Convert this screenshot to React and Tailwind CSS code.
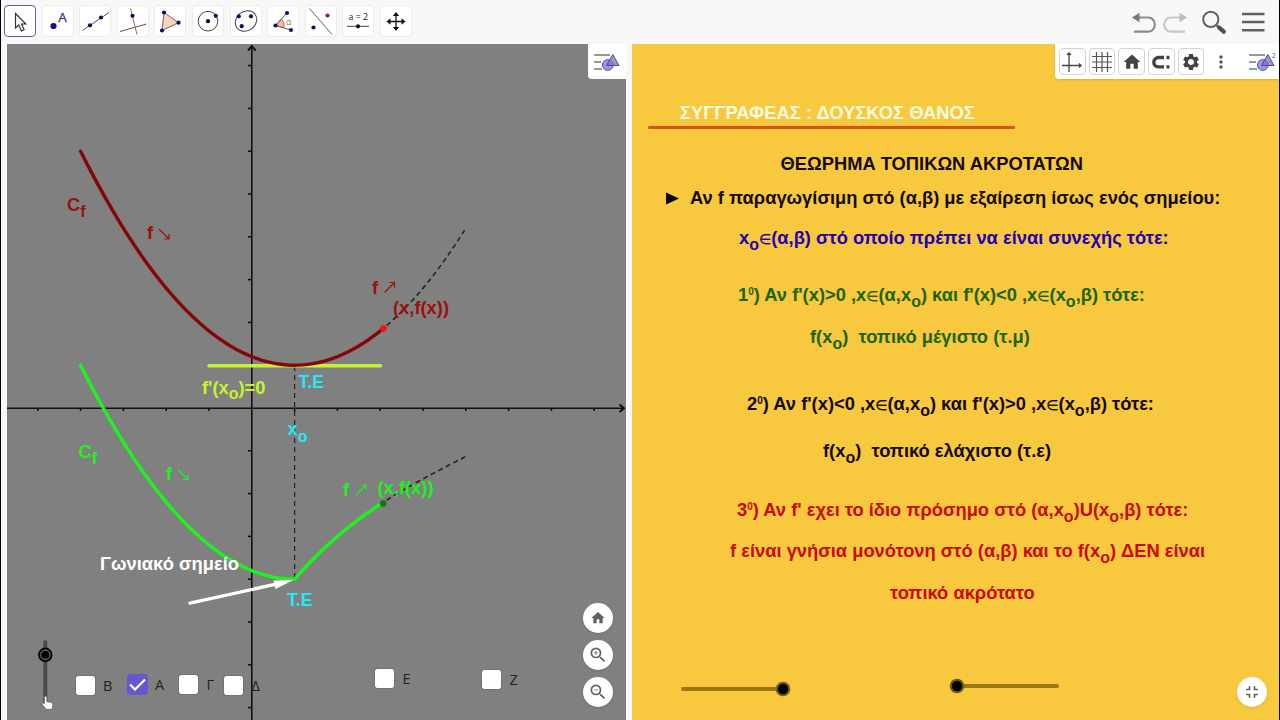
import { MdFullscreenExit, MdHome, MdMoreVert, MdSettings, MdZoomIn, MdZoomOut } from 'react-icons/md';
import clsx from 'clsx';

const NAVY = '#10106b';

// Origin and scale of the graphics view, in pixels
const ORIGIN = { x: 251.8, y: 408 };
const UNIT = 42.8;

const px = (x) => ORIGIN.x + x * UNIT;
const py = (y) => ORIGIN.y - y * UNIT;

function plot(fn, from, to) {
    const points = [];
    for (let i = 0; i <= 60; i++) {
        const x = from + ((to - from) * i) / 60;
        points.push(`${px(x).toFixed(2)},${py(fn(x)).toFixed(2)}`);
    }
    return points.join(' ');
}

const smooth = (x) => (x - 1) ** 2 / 5 + 1;
const cornerLeft = (x) => (x - 1) ** 2 / 5 - 4;
const cornerRight = (x) => {
    const t = x - 1;
    return -4 + 1.15 * t - 0.167 * t ** 2 + 0.0147 * t ** 3;
};

const Dot = ({ x, y, fill = NAVY, r = 2.1 }) => <circle cx={x} cy={y} r={r} fill={fill} />;

const tools = [
    {
        id: 'move',
        icon: <path d="M11.5 8.5V23l3.3-3 2.6 6 2.7-1.2-2.6-5.8h4.3z" fill="#fff" stroke="#333" strokeWidth="1.2" />,
    },
    {
        id: 'point',
        icon: (
            <>
                <Dot x={11.5} y={21} r={3.1} fill="#10108a" />
                <text x="16.3" y="16.7" fontSize="13.5" fill="#34348c" stroke="#34348c" strokeWidth=".3">A</text>
            </>
        ),
    },
    {
        id: 'line',
        icon: (
            <>
                <path d="M3.5 25.5 30 7.5" stroke="#555" />
                <Dot x={11} y={20.3} />
                <Dot x={22} y={12.5} />
            </>
        ),
    },
    {
        id: 'perpendicular',
        icon: (
            <>
                <path d="M3 26.5 29.5 19" stroke="#555" />
                <path d="M13.5 3.5 20 29.5" stroke="#a0695c" />
                <Dot x={15.5} y={10.8} />
            </>
        ),
    },
    {
        id: 'polygon',
        icon: (
            <>
                <path d="M10 7.5 24.5 17.7 8 25.5z" fill="#f5d3bd" stroke="#7a6560" />
                <Dot x={10} y={7.5} />
                <Dot x={24.5} y={17.7} />
                <Dot x={8} y={25.5} />
            </>
        ),
    },
    {
        id: 'circle',
        icon: (
            <>
                <circle cx="16" cy="16.2" r="9.8" fill="none" stroke="#444" />
                <Dot x={16} y={16.2} fill="#111" />
                <Dot x={23.8} y={10.8} />
            </>
        ),
    },
    {
        id: 'conic',
        icon: (
            <>
                <ellipse cx="16" cy="16" rx="11.3" ry="9.6" transform="rotate(-38 16 16)" fill="none" stroke="#444" />
                <Dot x={8.8} y={11.3} />
                <Dot x={21} y={11.3} />
                <Dot x={11.7} y={21.2} />
            </>
        ),
    },
    {
        id: 'angle',
        icon: (
            <>
                <path d="M8.5 20.5 14.5 14q3.5 3.5 2.5 8.5z" fill="#f5b9b0" stroke="#b34a4a" strokeWidth=".8" />
                <path d="M20 8 8.5 20.5 24 25" fill="none" stroke="#664" />
                <text x="19" y="19.5" fontSize="8.5" fill="#b06a4a">α</text>
                <Dot x={20} y={8} />
                <Dot x={8.5} y={20.5} />
                <Dot x={24} y={25} />
            </>
        ),
    },
    {
        id: 'reflect',
        icon: (
            <>
                <path d="M4.5 3.5 27 29.5" stroke="#666" />
                <Dot x={22.5} y={10.5} fill="#8b2a22" />
                <Dot x={8.5} y={22.5} />
            </>
        ),
    },
    {
        id: 'slider',
        icon: (
            <>
                <text x="6.5" y="15" fontSize="9.6" fill="#222" textLength="19.5" lengthAdjust="spacingAndGlyphs">a = 2</text>
                <path d="M5 21.3h22" stroke="#444" />
                <Dot x={16} y={21.3} fill="#111" />
            </>
        ),
    },
    {
        id: 'pan',
        icon: (
            <>
                <path d="M9 16.5h14M16 9.5v14" stroke="#111" strokeWidth="1.3" />
                <path d="m16 7 3.2 4h-6.4zm0 19 3.2-4h-6.4zM6.5 16.5l4-3.2v6.4zm19 0-4-3.2v6.4z" fill="#111" />
            </>
        ),
    },
];

function ToolButton({ active, children }) {
    return (
        <button
            className={clsx(
                'h-8 w-8 rounded border bg-white',
                active ? 'border-[#6a5f94]' : 'border-[#ececec]'
            )}
        >
            <svg viewBox="1 1 30 30" className="h-full w-full font-['Open_Sans',sans-serif]">{children}</svg>
        </button>
    );
}

function TopBar() {
    return (
        <header className="flex h-11 shrink-0 items-start justify-between bg-[#f8f8f8] pt-[5px] pr-[11.5px] pl-[3px]">
            <div className="flex gap-[5.6px]">
                {tools.map((tool, i) => (
                    <ToolButton key={tool.id} active={i === 0}>{tool.icon}</ToolButton>
                ))}
            </div>
            <svg width="148" height="36" viewBox="1120 5 148 36" fill="none">
                <path d="M1138 17.5h10.5a6 6.8 0 0 1 0 14.2H1134" stroke="#8b8b8b" strokeWidth="2.2" />
                <path d="m1132 17.5 7.5-4.8v9.6z" fill="#777" />
                <path d="M1181 17.5h-10.5a6 6.8 0 0 0 0 14.2h14.5" stroke="#c8c8c8" strokeWidth="2.2" />
                <path d="m1187 17.5-7.5-4.8v9.6z" fill="#bbb" />
                <circle cx="1210.8" cy="19.3" r="7.6" stroke="#606060" strokeWidth="2" />
                <path d="m1216.3 25 2.7 2.7" stroke="#606060" strokeWidth="2" />
                <path d="m1219 27.5 4.8 4.2" stroke="#505050" strokeWidth="4.2" strokeLinecap="round" />
                <path d="M1242 14h22.5M1242 22h22.5M1242 30.2h22.5" stroke="#606060" strokeWidth="2.4" />
            </svg>
        </header>
    );
}

function StyleBarIcon() {
    return (
        <svg width="28" height="22" viewBox="0 0 28 22">
            <path d="M1 4h16M1 11h7M1 18h8" stroke="#777" strokeWidth="1.7" />
            <circle cx="14.8" cy="14" r="5.4" fill="#9797e6" stroke="#5656a6" />
            <path d="M19.8 3.5 26 14.5H13.5z" fill="#7777bf" fillOpacity=".75" stroke="#4b4b91" />
        </svg>
    );
}

const bold = "font-['Liberation_Sans',Arial,sans-serif] font-bold";

function Label({ x, y, color, children, width }) {
    return (
        <text x={x} y={y} fill={color} textLength={width} lengthAdjust="spacingAndGlyphs">{children}</text>
    );
}

function Trend({ x, y, up, color }) {
    return up ? (
        <path d={`M${x} ${y}l10-10m-5 0h5v5`} fill="none" stroke={color} strokeWidth="1.2" />
    ) : (
        <path d={`M${x} ${y - 10}l10 10m-5 0h5v-5`} fill="none" stroke={color} strokeWidth="1.2" />
    );
}

function Graph() {
    const xTicks = [-5, -4, -3, -2, -1, 1, 2, 3, 4, 5, 6, 7, 8];
    const yTicks = [-7, -6, -5, -4, -3, -2, -1, 1, 2, 3, 4, 5, 6, 7, 8];
    return (
        <svg width="619" height="676" viewBox="7 44 619 676" className={clsx('block text-[18.3px]', bold)}>
            <g stroke="#111" strokeWidth="1.6" fill="none">
                <path d="M7 408.3H624M251.8 720V47" />
                <path d="m619.5 404.5 4.5 3.8-4.5 3.8M248 50.5l3.8-4.5 3.8 4.5" strokeWidth="2" />
                {xTicks.map((n) => <path key={n} d={`M${px(n)} 408v3`} />)}
                {yTicks.map((n) => <path key={n} d={`M251 ${py(n)}h-3`} />)}
            </g>

            <path d="M294.6 366V579" stroke="#222" strokeWidth="1.2" strokeDasharray="5 4" />
            <path d="M209 365.8H380.5" stroke="#c3f52c" strokeWidth="3.4" strokeLinecap="round" />

            <g fill="none" stroke="#222" strokeWidth="1.6" strokeDasharray="5 3.5">
                <polyline points={plot(smooth, 3.15, 4.97)} />
                <polyline points={plot(cornerRight, 3.15, 5)} />
            </g>
            <g fill="none" strokeWidth="3.4" strokeLinecap="round">
                <polyline points={plot(smooth, -4, 3.07)} stroke="#850606" />
                <polyline points={plot(cornerLeft, -4, 1)} stroke="#1bf51b" />
                <polyline points={plot(cornerRight, 1, 3.07)} stroke="#1bf51b" />
            </g>
            <circle cx="383.4" cy="328.6" r="3.3" fill="#fb1010" />
            <circle cx="383.2" cy="503.5" r="3.3" fill="#137a13" />

            <Label x="67" y="211" color="#9b0f0f">C<tspan dy="6" fontSize="16">f</tspan></Label>
            <Label x="147" y="239" color="#9b0f0f">f</Label>
            <Trend x={159} y={239} color="#9b0f0f" />
            <Label x="372" y="293.5" color="#9b0f0f">f</Label>
            <Trend x={384.5} y={292.5} up color="#9b0f0f" />
            <Label x="393" y="313.5" width="56" color="#9b0f0f">(x,f(x))</Label>
            <Label x="202" y="393.5" color="#c3f52c">f'(x<tspan dy="5" fontSize="16">o</tspan><tspan dy="-5">)=0</tspan></Label>
            <Label x="298.5" y="387.5" width="25.5" color="#20eaf5">T.E</Label>
            <Label x="287.5" y="435" color="#20eaf5">x<tspan dy="6.5" fontSize="16">o</tspan></Label>
            <Label x="78.5" y="458" color="#1bf51b">C<tspan dy="6" fontSize="16">f</tspan></Label>
            <Label x="166" y="480" color="#1bf51b">f</Label>
            <Trend x={178} y={479.5} color="#1bf51b" />
            <Label x="343" y="496" color="#1bf51b">f</Label>
            <Trend x={356} y={495} up color="#1bf51b" />
            <Label x="377.5" y="494" width="56" color="#1bf51b">(x,f(x))</Label>
            <Label x="287" y="606" width="25.5" color="#20eaf5">T.E</Label>
            <Label x="100" y="570" width="139" color="#fff">Γωνιακό σημείο</Label>

            <path d="M190 603.2 276 584.2" stroke="#fff" strokeWidth="3.4" strokeLinecap="round" />
            <path d="m293 580.3-19.5.1 2 8.5z" fill="#fff" />

            <path d="M45.3 642V704" stroke="#4b4b4b" strokeWidth="4" strokeLinecap="round" />
            <circle cx="45.3" cy="654.8" r="6.5" fill="#222" stroke="#000" strokeWidth="1.4" />
            <circle cx="45.3" cy="654.8" r="4.6" fill="#000" stroke="#777" strokeWidth="1" />
            <path
                d="M44.3 697.5c0-1.8 2.6-1.8 2.6 0v4l4 .8c1.6.4 2.2 1.2 2 2.8l-.8 4.3h-6l-4-5c-.6-1.4.8-2 2.2-.8z"
                fill="#fff"
                stroke="#555"
                strokeWidth=".8"
            />
        </svg>
    );
}

const checkboxes = [
    { label: 'B', place: 'left-[68.5px] top-[632px]' },
    { label: 'A', place: 'left-[120.5px] top-[631px]', checked: true },
    { label: 'Γ', place: 'left-[172px] top-[631px]' },
    { label: 'Δ', place: 'left-[217px] top-[632px]' },
    { label: 'E', place: 'left-[368px] top-[624.5px]' },
    { label: 'Z', place: 'left-[475px] top-[626px]' },
];

function Checkbox({ label, place, checked }) {
    return (
        <div className={clsx("absolute flex items-center gap-[8.5px] font-['Open_Sans',sans-serif] text-[14.5px] leading-[19px] text-[#222]", place)}>
            <span
                className={clsx(
                    'flex size-[19px] items-center justify-center rounded-[2px] outline',
                    checked ? 'bg-[#6557d2] outline-[#6557d2]' : 'bg-white outline-[#737373]'
                )}
            >
                {checked && (
                    <svg viewBox="0 0 19 19" className="size-[19px]">
                        <path d="m2 9.5 5 5L17 4.5" fill="none" stroke="#fff" strokeWidth="2.2" />
                    </svg>
                )}
            </span>
            {label}
        </div>
    );
}

function RoundButton({ children }) {
    return (
        <button className="flex size-[30px] items-center justify-center rounded-full bg-white text-[20px] text-[#616161] shadow">
            {children}
        </button>
    );
}

function GraphicsView() {
    return (
        <section className="relative w-[619px] shrink-0 overflow-hidden bg-[#808080]">
            <Graph />
            {checkboxes.map((box) => <Checkbox key={box.label} {...box} />)}
            <div className="absolute top-0 right-0 flex h-[35px] w-[38px] items-center justify-center rounded-bl bg-white">
                <StyleBarIcon />
            </div>
            <div className="absolute top-[559px] right-[13.5px] flex flex-col gap-[7px]">
                <RoundButton><MdHome className="size-4" /></RoundButton>
                <RoundButton><MdZoomIn /></RoundButton>
                <RoundButton><MdZoomOut /></RoundButton>
            </div>
        </section>
    );
}

const Xo = () => <>x<sub className="bottom-auto top-[6px] text-[16px]">o</sub></>;
const In = () => <span className="font-['DejaVu_Sans',sans-serif] text-[14px] font-normal [-webkit-text-stroke:0.3px]">∈</span>;
const Nth = ({ n }) => <>{n}<sup className="top-[-6px] text-[10px]">0</sup>)</>;

function Line({ className, children }) {
    return <p className={clsx('h-6 whitespace-pre', className)}>{children}</p>;
}

function Theorem() {
    return (
        <div className={clsx('flex flex-col pt-[57px] text-[18.34px] leading-6 text-[#140a00]', bold)}>
            <Line className="pl-12 tracking-[0.04px] text-[#fffbe0]">ΣΥΓΓΡΑΦΕΑΣ : ΔΟΥΣΚΟΣ ΘΑΝΟΣ</Line>
            <hr className="mt-[1px] ml-4 h-[2.5px] w-[367px] rounded border-0 bg-[#dd5019]" />
            <Line className="mt-[23.5px] pl-[148.5px]">ΘΕΩΡΗΜΑ ΤΟΠΙΚΩΝ ΑΚΡΟΤΑΤΩΝ</Line>
            <div className="mt-[10px] flex items-center pl-[34px]">
                <svg width="13" height="13" viewBox="0 0 13 13"><path d="M0 .5 13 6.5 0 12.5z" /></svg>
                <Line className="pl-[11px]">Αν f παραγωγίσιμη στό (α,β) με εξαίρεση ίσως ενός σημείου:</Line>
            </div>
            <Line className="mt-[16px] pl-[107px] text-[#2200b4]"><Xo /><In />(α,β) στό οποίο πρέπει να είναι συνεχής τότε:</Line>
            <div className="mt-[33px] text-[#1c6400]">
                <Line className="pl-[106px]"><Nth n="1" /> Αν f'(x)&gt;0 ,x<In />(α,<Xo />) και f'(x)&lt;0 ,x<In />(<Xo />,β) τότε:</Line>
                <Line className="mt-[18px] pl-[178px]">f(<Xo />)  τοπικό μέγιστο (τ.μ)</Line>
            </div>
            <Line className="mt-[43px] pl-[115px]"><Nth n="2" /> Αν f'(x)&lt;0 ,x<In />(α,<Xo />) και f'(x)&gt;0 ,x<In />(<Xo />,β) τότε:</Line>
            <Line className="mt-[23px] pl-[191px]">f(<Xo />)  τοπικό ελάχιστο (τ.ε)</Line>
            <div className="mt-[35px] text-[#c80a00]">
                <Line className="pl-[105px]"><Nth n="3" /> Αν f' εχει το ίδιο πρόσημο στό (α,<Xo />)U(<Xo />,β) τότε:</Line>
                <Line className="mt-[17px] pl-[98px]">f είναι γνήσια μονότονη στό (α,β) και το f(<Xo />) ΔΕΝ είναι</Line>
                <Line className="mt-[18px] pl-[258px]">τοπικό ακρότατο</Line>
            </div>
        </div>
    );
}

function Slider({ end }) {
    return (
        <svg width="118" height="16" viewBox="0 0 118 16">
            <path d="M10 8H108" stroke="#9c7712" strokeWidth="3.8" strokeLinecap="round" />
            <circle cx={end ? 110 : 8} cy="8" r="7.3" fill="#735a16" />
            <circle cx={end ? 110 : 8} cy="8" r="5.2" fill="#000" />
        </svg>
    );
}

function BarButton({ children }) {
    return (
        <button className="flex size-[26.5px] shrink-0 items-center justify-center rounded border border-[#d2d2dc] text-[20px] text-[#444]">
            {children}
        </button>
    );
}

function StyleBar() {
    return (
        <div className="absolute top-0 right-0 flex h-[35px] w-[224px] items-center gap-[3.2px] overflow-hidden rounded-bl bg-white pl-1 shadow-sm">
            <BarButton>
                <svg width="22" height="22" viewBox="0 0 22 22" fill="none" stroke="#444" strokeWidth="1.3">
                    <path d="M1 14.5h19M8 21V2M18 12.5l2 2-2 2M6 4l2-2 2 2" />
                </svg>
            </BarButton>
            <BarButton>
                <svg width="22" height="22" viewBox="0 0 22 22" stroke="#555" strokeWidth="1.2">
                    <path d="M5.5 1v20M11 1v20M16.5 1v20M1 5.5h20M1 11h20M1 16.5h20" />
                </svg>
            </BarButton>
            <BarButton><MdHome /></BarButton>
            <BarButton>
                <svg width="20" height="20" viewBox="0 0 20 20" fill="none" stroke="#444" strokeWidth="3.4">
                    <path d="M13 5.5H7.5a4.7 4.7 0 0 0 0 9.4H13M15.5 5.5h3M15.5 14.9h3" />
                </svg>
            </BarButton>
            <BarButton><MdSettings /></BarButton>
            <MdMoreVert className="ml-[3.5px] size-[20px] shrink-0 text-[#555]" />
            <div className="relative ml-[14px] shrink-0">
                <StyleBarIcon />
                <span className="absolute top-0 left-[23.5px] text-[7px] leading-[9px] text-[#5656a6]">2</span>
            </div>
        </div>
    );
}

function TextView() {
    return (
        <section className="relative grow overflow-hidden bg-[#f8c93e]">
            <Theorem />
            <StyleBar />
            <div className="absolute top-[637px] left-[41px]"><Slider end /></div>
            <div className="absolute top-[634px] left-[317px]"><Slider /></div>
            <div className="absolute top-[633px] right-[12.5px]">
                <RoundButton><MdFullscreenExit /></RoundButton>
            </div>
        </section>
    );
}

export default function App() {
    return (
        <div className="flex h-[720px] w-[1280px] flex-col overflow-hidden border-x border-black bg-[#f8f8f8]">
            <TopBar />
            <main className="flex grow gap-[6px] pl-[6px]">
                <GraphicsView />
                <TextView />
            </main>
        </div>
    );
}
